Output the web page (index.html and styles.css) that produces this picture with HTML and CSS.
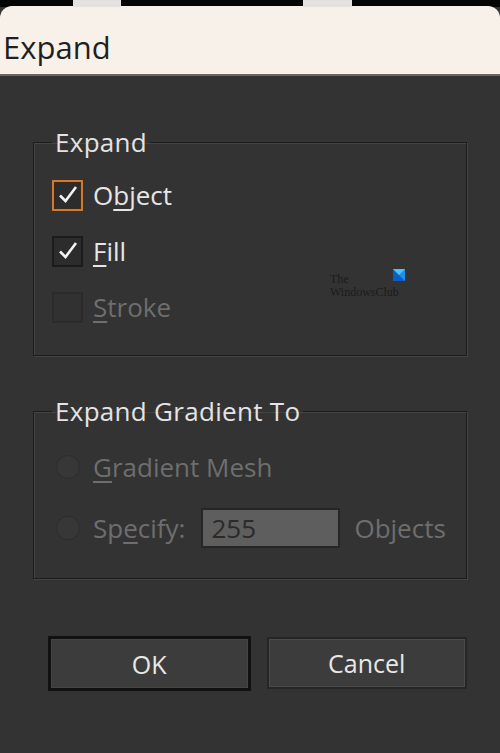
FILE: index.html
```html
<!DOCTYPE html>
<html lang="en">
<head>
  <meta charset="UTF-8">
  <title>Expand</title>
  <link rel="stylesheet" href="styles.css">
</head>
<body>

<div class="top-strip">
  <span class="tab tab-left"></span>
  <span class="tab tab-right"></span>
</div>

<header class="title-bar">Expand</header>

<div class="dialog">
  <fieldset class="group group-expand">
    <legend>Expand</legend>

    <div class="row">
      <span class="check checked focused">
        <svg viewBox="0 0 24 24" width="24" height="24"><path d="M4 12.5 L9.5 18 L20 4" fill="none" stroke="#f2f2f2" stroke-width="2.6"/></svg>
      </span>
      <span class="label">O<u>b</u>ject</span>
    </div>

    <div class="row">
      <span class="check checked">
        <svg viewBox="0 0 24 24" width="24" height="24"><path d="M4 12.5 L9.5 18 L20 4" fill="none" stroke="#f2f2f2" stroke-width="2.6"/></svg>
      </span>
      <span class="label"><u>F</u>ill</span>
    </div>

    <div class="row disabled">
      <span class="check"></span>
      <span class="label"><u>S</u>troke</span>
    </div>

    <div class="watermark">
      <span class="wm-line">The</span>
      <span class="wm-line">WindowsClub</span>
      <svg class="wm-logo" viewBox="0 0 12 12" width="12" height="12">
        <rect width="12" height="12" fill="#1e90e8"/>
        <path d="M0 0 L12 12 L0 12 Z" fill="#0b5fc4"/>
        <path d="M0 0 L12 0 L6 6 Z" fill="#4fc3f7"/>
      </svg>
    </div>
  </fieldset>

  <fieldset class="group group-gradient">
    <legend>Expand Gradient To</legend>

    <div class="row disabled">
      <span class="radio"></span>
      <span class="label"><u>G</u>radient Mesh</span>
    </div>

    <div class="row disabled">
      <span class="radio"></span>
      <span class="label">Sp<u>e</u>cify:</span>
      <span class="number-box">255</span>
      <span class="label">Objects</span>
    </div>
  </fieldset>

  <div class="buttons">
    <button class="btn btn-default">OK</button>
    <button class="btn">Cancel</button>
  </div>
</div>

</body>
</html>
```

FILE: styles.css
```css
* {
  box-sizing: border-box;
}

body {
  margin: 0;
  width: 500px;
  height: 753px;
  overflow: hidden;
  background-color: #333333;
  font-family: "Open Sans", "Noto Sans", sans-serif;
  color: #e2e2e2;
}

.top-strip {
  height: 7px;
  background-color: #050505;
  display: flex;
}

.tab {
  display: block;
  height: 7px;
  background-color: #e4e1de;
}

.tab-left {
  width: 48px;
  margin-left: 73px;
}

.tab-right {
  width: 49px;
  margin-left: 182px;
}

.title-bar {
  height: 70px;
  margin-top: -1px;
  background-color: #f8f1ea;
  border-radius: 12px 12px 0 0;
  border-bottom: 2px solid #6a6562;
  color: #1f1f1f;
  font-size: 31px;
  line-height: 1;
  padding: 26px 0 0 3px;
}

.dialog {
  padding: 0 33px;
  position: relative;
}

.group {
  margin: 0;
  padding: 0 0 0 18px;
  border: 1px solid #1d1d1d;
  box-shadow: 1px 1px 0 #444444, inset 1px 1px 0 #444444;
}

.group legend {
  padding: 0 3px;
  margin-left: 0;
  font-size: 26px;
  line-height: 30px;
  letter-spacing: 0.3px;
  color: #e4e4e4;
}

.group-expand {
  margin-top: 51px;
  height: 229px;
  padding-top: 10px;
  position: relative;
}

.group-gradient {
  margin-top: 40px;
  height: 183px;
  padding-top: 10px;
}

.row {
  display: flex;
  align-items: center;
  height: 56px;
  gap: 10px;
}

.group-gradient .row {
  height: 61px;
}

.label {
  font-size: 26px;
  color: #e6e6e6;
}

.label u {
  text-underline-offset: 4px;
  text-decoration-thickness: 2px;
}

.row.disabled .label {
  color: #6e6e6e;
}

.check {
  width: 31px;
  height: 31px;
  border: 2px solid #1c1c1c;
  background-color: #2c2c2c;
  display: flex;
  align-items: center;
  justify-content: center;
}

.check.focused {
  border-color: #cf7a32;
  box-shadow: inset 0 0 0 1px #3a2a1a;
}

.row.disabled .check {
  border-color: #2b2b2b;
  background-color: #313131;
}

.radio {
  width: 24px;
  height: 24px;
  border-radius: 50%;
  background-color: #373737;
  border: 1px solid #2d2d2d;
  margin-left: 4px;
  margin-right: 3px;
}

.number-box {
  width: 139px;
  height: 40px;
  margin-left: 6px;
  margin-right: 4px;
  background-color: #5e5e5e;
  border: 2px solid #262626;
  color: #2a2a2a;
  font-size: 26px;
  line-height: 36px;
  padding-left: 8px;
}

/* watermark sits over the panel */
.watermark {
  position: absolute;
  left: 296px;
  top: 116px;
  width: 80px;
  font-family: "Liberation Serif", serif;
  font-size: 12px;
  color: #1b1b1b;
}

.wm-line {
  display: block;
  height: 13px;
  line-height: 13px;
}

.wm-logo {
  position: absolute;
  left: 63px;
  top: -4px;
}

.buttons {
  display: flex;
  align-items: flex-start;
  gap: 16px;
  margin-top: 57px;
  padding-left: 15px;
}

.btn {
  height: 52px;
  width: 201px;
  margin-top: 1px;
  background-color: #3c3c3c;
  border: 2px solid #262626;
  box-shadow: inset 0 0 0 1px #4a4a4a;
  color: #e8e8e8;
  font-family: "Open Sans", "Noto Sans", sans-serif;
  font-size: 25px;
  padding: 0;
}

.btn-default {
  height: 55px;
  width: 203px;
  margin-top: 0;
  border: 3px solid #111111;
  box-shadow: inset 0 0 0 1px #454545;
}
```
